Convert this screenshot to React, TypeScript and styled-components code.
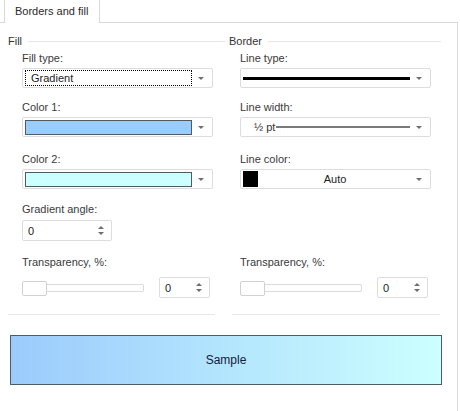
import styled, { createGlobalStyle } from 'styled-components';

const GlobalStyle = createGlobalStyle`
	html, body {
		margin: 0;
		padding: 0;
		background: #ffffff;
	}
	body {
		font-family: 'Liberation Sans', Arial, sans-serif;
		font-size: 11px;
		color: #3a3a3a;
	}
`;

const Page = styled.div`
	width: 460px;
	height: 411px;
	overflow: hidden;
	background: #ffffff;
`;

const TabStrip = styled.div`
	display: flex;
	height: 22px;
	padding-left: 4px;
`;

const Tab = styled.div`
	position: relative;
	z-index: 1;
	box-sizing: border-box;
	width: 96px;
	height: 23px;
	padding: 5px 0 0 10px;
	background: #ffffff;
	border-left: 1px solid #d9d9d9;
	border-right: 1px solid #d9d9d9;
	color: #2a2a2a;
	font-size: 11px;
	line-height: 13px;
`;

const Panel = styled.div`
	box-sizing: border-box;
	width: 458px;
	height: 389px;
	padding: 11px 0 0 8px;
	border-top: 1px solid #d9d9d9;
	border-right: 1px solid #d9d9d9;
`;

const Columns = styled.div`
	display: grid;
	grid-template-columns: 217px 212px;
	column-gap: 4px;
	align-items: start;
`;

const Heading = styled.div`
	display: flex;
	align-items: center;
	height: 14px;
	line-height: 14px;
	color: #333333;
	&::after {
		content: '';
		flex: 1;
		height: 1px;
		margin-left: 6px;
		background: #e6e6e6;
	}
`;

const Field = styled.div<{ $top: number; $indent: number; $gap?: number }>`
	display: flex;
	flex-direction: column;
	margin-top: ${({ $top }) => $top}px;
	padding-left: ${({ $indent }) => $indent}px;
	& > label {
		height: 14px;
		line-height: 14px;
		margin-bottom: ${({ $gap }) => $gap ?? 3}px;
		color: #3a3a3a;
	}
`;

const Combo = styled.div`
	box-sizing: border-box;
	display: flex;
	align-items: center;
	width: 191px;
	height: 20px;
	padding: 0 2px;
	border: 1px solid #dcdcdc;
	border-radius: 2px;
	background: #ffffff;
`;

const ComboValue = styled.div<{ $focused?: boolean }>`
	box-sizing: border-box;
	flex: 1;
	display: flex;
	align-items: center;
	height: 16px;
	padding-left: 5px;
	color: #222222;
	border: 1px dotted ${({ $focused }) => ($focused ? '#000000' : 'transparent')};
`;

const Swatch = styled.div<{ $color: string }>`
	box-sizing: border-box;
	width: 169px;
	height: 15px;
	border: 1px solid #505a60;
	background: ${({ $color }) => $color};
`;

const LineSample = styled.div<{ $thick: number; $color: string }>`
	flex: 1;
	height: ${({ $thick }) => $thick}px;
	background: ${({ $color }) => $color};
`;

const WidthText = styled.span`
	margin: 0 1px 0 11px;
	color: #333333;
`;

const ColorBox = styled.div`
	width: 15px;
	height: 16px;
	background: #000000;
`;

const CenterText = styled.div`
	flex: 1;
	text-align: center;
	color: #222222;
	padding-left: 2px;
`;

const ArrowBox = styled.div`
	display: flex;
	align-items: center;
	justify-content: center;
	width: 18px;
	height: 100%;
	flex: none;
`;

const Caret = styled.div<{ $up?: boolean }>`
	width: 0;
	height: 0;
	border-left: 3px solid transparent;
	border-right: 3px solid transparent;
	${({ $up }) => ($up ? 'border-bottom: 3px solid #6e6e6e;' : 'border-top: 3px solid #6e6e6e;')}
`;

const Spin = styled.div<{ $width: number }>`
	box-sizing: border-box;
	display: flex;
	align-items: center;
	width: ${({ $width }) => $width}px;
	height: 21px;
	padding-left: 5px;
	border: 1px solid #dcdcdc;
	border-radius: 2px;
	color: #222222;
	& > span {
		flex: 1;
	}
`;

const SpinArrows = styled.div`
	display: flex;
	flex-direction: column;
	align-items: center;
	gap: 3px;
	width: 16px;
	margin-right: 2px;
`;

const SliderRow = styled.div`
	display: flex;
	align-items: center;
	gap: 15px;
`;

const SliderTrack = styled.div`
	position: relative;
	box-sizing: border-box;
	width: 122px;
	height: 8px;
	border: 1px solid #dadada;
	border-radius: 2px;
	background: #ffffff;
`;

const SliderThumb = styled.div`
	position: absolute;
	left: -1px;
	top: -4px;
	box-sizing: border-box;
	width: 25px;
	height: 15px;
	border: 1px solid #d0d0d0;
	border-radius: 2px;
	background: #ffffff;
`;

const Separator = styled.div<{ $left: number; $right: number }>`
	height: 1px;
	margin: 16px ${({ $right }) => $right}px 0 ${({ $left }) => $left}px;
	background: #e8e8e8;
`;

const Sample = styled.div`
	box-sizing: border-box;
	display: flex;
	align-items: center;
	justify-content: center;
	width: 432px;
	height: 50px;
	margin: 20px 0 0 2px;
	border: 1px solid #4b5e68;
	background: linear-gradient(to right, #9bcbfc, #ccffff);
	color: #151a3c;
	font-size: 12px;
`;

const Arrow = () => (
	<ArrowBox>
		<Caret />
	</ArrowBox>
);

const SpinBox = ({ width, value }: { width: number; value: string }) => (
	<Spin $width={width}>
		<span>{value}</span>
		<SpinArrows>
			<Caret $up />
			<Caret />
		</SpinArrows>
	</Spin>
);

const Transparency = ({ indent }: { indent: number }) => (
	<Field $top={14} $indent={indent} $gap={8}>
		<label>Transparency, %:</label>
		<SliderRow>
			<SliderTrack>
				<SliderThumb />
			</SliderTrack>
			<SpinBox width={51} value="0" />
		</SliderRow>
	</Field>
);

export default function App() {
	return (
		<Page>
			<GlobalStyle />
			<TabStrip>
				<Tab>Borders and fill</Tab>
			</TabStrip>
			<Panel>
				<Columns>
					<Heading>Fill</Heading>
					<Heading>Border</Heading>

					<Field $top={3} $indent={14}>
						<label>Fill type:</label>
						<Combo>
							<ComboValue $focused>Gradient</ComboValue>
							<Arrow />
						</Combo>
					</Field>
					<Field $top={3} $indent={11}>
						<label>Line type:</label>
						<Combo>
							<LineSample $thick={3} $color="#000000" />
							<Arrow />
						</Combo>
					</Field>

					<Field $top={12} $indent={14}>
						<label>Color 1:</label>
						<Combo>
							<Swatch $color="#99ccff" />
							<Arrow />
						</Combo>
					</Field>
					<Field $top={12} $indent={11}>
						<label>Line width:</label>
						<Combo>
							<WidthText>½ pt</WidthText>
							<LineSample $thick={2} $color="#7a7a7a" />
							<Arrow />
						</Combo>
					</Field>

					<Field $top={15} $indent={14}>
						<label>Color 2:</label>
						<Combo>
							<Swatch $color="#ccffff" />
							<Arrow />
						</Combo>
					</Field>
					<Field $top={15} $indent={11}>
						<label>Line color:</label>
						<Combo>
							<ColorBox />
							<CenterText>Auto</CenterText>
							<Arrow />
						</Combo>
					</Field>

					<Field $top={13} $indent={14} $gap={4}>
						<label>Gradient angle:</label>
						<SpinBox width={90} value="0" />
					</Field>
					<div />

					<Transparency indent={14} />
					<Transparency indent={11} />

					<Separator $left={0} $right={10} />
					<Separator $left={3} $right={1} />
				</Columns>
				<Sample>Sample</Sample>
			</Panel>
		</Page>
	);
}
